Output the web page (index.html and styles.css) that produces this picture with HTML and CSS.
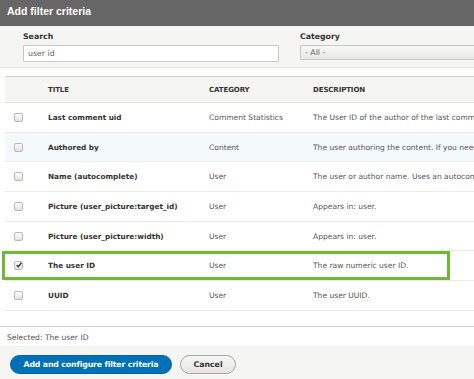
FILE: index.html
```html
<!DOCTYPE html>
<html>
<head>
<meta charset="utf-8">
<link rel="stylesheet" href="styles.css">
</head>
<body>
<div class="dialog">
  <div class="titlebar">Add filter criteria</div>
  <div class="filters">
    <div class="field search">
      <label class="lbl">Search</label>
      <div class="input">user id</div>
    </div>
    <div class="field category">
      <label class="lbl">Category</label>
      <div class="select">- All -</div>
    </div>
  </div>
  <div class="tablewrap">
    <table class="grid">
      <colgroup><col class="c1"><col class="c2"><col class="c3"><col class="c4"></colgroup>
      <thead>
        <tr><th></th><th>TITLE</th><th>CATEGORY</th><th>DESCRIPTION</th></tr>
      </thead>
      <tbody>
        <tr><td><span class="cb"></span></td><td class="t">Last comment uid</td><td>Comment Statistics</td><td>The User ID of the author of the last comment of a node.</td></tr>
        <tr class="hl"><td><span class="cb"></span></td><td class="t">Authored by</td><td>Content</td><td>The user authoring the content. If you need more fields than the uid add the content: author relationship</td></tr>
        <tr><td><span class="cb"></span></td><td class="t">Name (autocomplete)</td><td>User</td><td>The user or author name. Uses an autocomplete widget to find a user name.</td></tr>
        <tr><td><span class="cb"></span></td><td class="t">Picture (user_picture:target_id)</td><td>User</td><td>Appears in: user.</td></tr>
        <tr><td><span class="cb"></span></td><td class="t">Picture (user_picture:width)</td><td>User</td><td>Appears in: user.</td></tr>
        <tr><td><span class="cb checked"><svg viewBox="0 0 8 8" width="8" height="8"><path d="M1.6 4.2 L3.3 5.8 L6.4 1.8" fill="none" stroke="#333" stroke-width="1.4"/></svg></span></td><td class="t">The user ID</td><td>User</td><td>The raw numeric user ID.</td></tr>
        <tr><td><span class="cb"></span></td><td class="t">UUID</td><td>User</td><td>The user UUID.</td></tr>
      </tbody>
    </table>
    <div class="highlight"></div>
  </div>
  <div class="selected">Selected: The user ID</div>
  <div class="actions">
    <button class="btn primary">Add and configure filter criteria</button>
    <button class="btn">Cancel</button>
  </div>
</div>
</body>
</html>
```
FILE: styles.css
```css
html, body {
  margin: 0;
  padding: 0;
  background: #fff;
  overflow: hidden;
}
body {
  width: 474px;
  height: 379px;
  font-family: "DejaVu Sans", "Lucida Grande", Verdana, sans-serif;
  color: #333;
}
.dialog {
  width: 474px;
  height: 379px;
  display: flex;
  flex-direction: column;
}
.titlebar {
  height: 26px;
  box-sizing: border-box;
  background: #666666;
  color: #fff;
  font-family: "Liberation Sans", Arial, sans-serif;
  font-weight: bold;
  font-size: 10.5px;
  line-height: 22px;
  padding-left: 7px;
}
.filters {
  height: 42px;
  box-sizing: border-box;
  background: #f5f5f2;
  border-bottom: 1px solid #e8e7e2;
  display: flex;
  gap: 21px;
  padding: 5px 0 0 23px;
}
.field {
  display: flex;
  flex-direction: column;
}
.lbl {
  font-size: 7.8px;
  font-weight: bold;
  color: #333;
  line-height: 12px;
  height: 14px;
}
.search { width: 256px; }
.category { flex: 1; }
.input {
  height: 17px;
  box-sizing: border-box;
  border: 1px solid #c9c8c2;
  border-radius: 1px;
  background: #fff;
  font-size: 7.8px;
  color: #666;
  line-height: 15px;
  padding-left: 4px;
}
.select {
  height: 15px;
  box-sizing: border-box;
  border: 1px solid #c9c8c2;
  border-right: none;
  border-radius: 2px 0 0 2px;
  background: linear-gradient(#f8f8f6, #e8e8e4);
  font-size: 7.8px;
  color: #666;
  line-height: 13px;
  padding-left: 4px;
}
.tablewrap {
  position: relative;
  margin-top: 8px;
  padding-left: 5px;
  overflow: hidden;
}
.grid {
  width: 469px;
  table-layout: fixed;
  border-collapse: collapse;
  font-size: 7.55px;
}
.c1 { width: 43px; }
.c2 { width: 161px; }
.c3 { width: 104px; }
.c4 { width: 161px; }
.grid th {
  height: 26px;
  box-sizing: border-box;
  background: #f5f5f2;
  border-top: 1px solid #cfcfcb;
  border-bottom: 1px solid #e6e5e0;
  text-align: left;
  font-weight: bold;
  font-size: 7px;
  color: #333;
  padding: 0;
  letter-spacing: -0.1px;
}
.grid td {
  height: 29.7px;
  box-sizing: border-box;
  padding: 0;
  border-bottom: 1px solid #ebebe8;
  color: #555;
  white-space: nowrap;
  overflow: hidden;
}
.grid td:first-child { padding-left: 9px; }
.grid td.t {
  font-weight: bold;
  color: #333;
  font-size: 7.3px;
}
.grid tr.hl td { background: #f4f9fc; }
.cb {
  display: block;
  width: 7px;
  height: 7px;
  border: 1px solid #b9b9b5;
  border-radius: 2px;
  background: linear-gradient(#fdfdfd, #e2e2df);
  position: relative;
}
.cb svg {
  position: absolute;
  left: 0;
  top: -1px;
}
.highlight {
  position: absolute;
  left: 2px;
  top: 175px;
  width: 448px;
  height: 29px;
  box-sizing: border-box;
  border: 3px solid #70b936;
}
.selected {
  margin-top: 15px;
  border-top: 1px solid #d4d4d0;
  height: 20px;
  box-sizing: border-box;
  font-size: 7.6px;
  color: #555;
  line-height: 21px;
  padding-left: 7px;
}
.actions {
  flex: 1;
  background: #f5f5f2;
  display: flex;
  align-items: flex-start;
  gap: 8px;
  padding: 9px 0 0 10px;
}
.btn {
  height: 19px;
  box-sizing: border-box;
  border-radius: 10px;
  font-family: "DejaVu Sans", Verdana, sans-serif;
  font-weight: bold;
  font-size: 7.8px;
  padding: 0;
  margin: 0;
  border: 1px solid #a6a6a1;
  background: linear-gradient(#f7f7f4, #e6e5e0);
  color: #333;
  width: 56px;
}
.btn.primary {
  width: 162px;
  background: #0071b8;
  border-color: #0064a6;
  color: #fff;
  letter-spacing: -0.15px;
}
```
